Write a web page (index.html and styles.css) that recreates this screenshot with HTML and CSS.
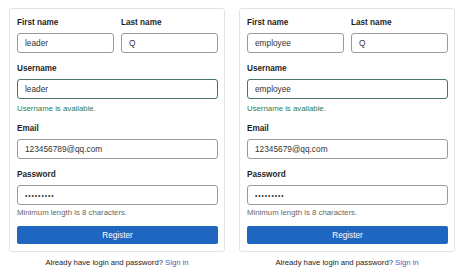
FILE: index.html
```html
<!DOCTYPE html>
<html>
<head>
<meta charset="utf-8">
<link rel="stylesheet" href="styles.css">
</head>
<body>
<div class="page">
  <div class="col">
    <form class="card">
      <div class="names">
        <div class="field">
          <label class="label">First name</label>
          <input class="input" type="text" value="leader">
        </div>
        <div class="field">
          <label class="label">Last name</label>
          <input class="input" type="text" value="Q">
        </div>
      </div>
      <div class="field">
        <label class="label">Username</label>
        <input class="input valid" type="text" value="leader">
        <div class="help ok">Username is available.</div>
      </div>
      <div class="field">
        <label class="label">Email</label>
        <input class="input" type="text" value="123456789@qq.com">
      </div>
      <div class="field">
        <label class="label">Password</label>
        <input class="input pw" type="password" value="123456789">
        <div class="help hint">Minimum length is 8 characters.</div>
      </div>
      <button class="btn" type="button">Register</button>
    </form>
    <p class="foot">Already have login and password? <a class="link" href="#">Sign in</a></p>
  </div>
  <div class="col">
    <form class="card">
      <div class="names">
        <div class="field">
          <label class="label">First name</label>
          <input class="input" type="text" value="employee">
        </div>
        <div class="field">
          <label class="label">Last name</label>
          <input class="input" type="text" value="Q">
        </div>
      </div>
      <div class="field">
        <label class="label">Username</label>
        <input class="input valid" type="text" value="employee">
        <div class="help ok">Username is available.</div>
      </div>
      <div class="field">
        <label class="label">Email</label>
        <input class="input" type="text" value="12345679@qq.com">
      </div>
      <div class="field">
        <label class="label">Password</label>
        <input class="input pw" type="password" value="123456789">
        <div class="help hint">Minimum length is 8 characters.</div>
      </div>
      <button class="btn" type="button">Register</button>
    </form>
    <p class="foot">Already have login and password? <a class="link" href="#">Sign in</a></p>
  </div>
</div>
</body>
</html>
```
FILE: styles.css
```css
* { box-sizing: border-box; }
html, body { margin: 0; padding: 0; background: #ffffff; }
body {
  font-family: "Liberation Sans", Arial, sans-serif;
  color: #1f1f1f;
  width: 474px;
  height: 277px;
  overflow: hidden;
}
.page {
  display: flex;
  gap: 14px;
  padding: 8px 0 0 9px;
}
.col {
  width: 216px;
  display: flex;
  flex-direction: column;
}
.card {
  margin: 0;
  border: 1px solid #e2e2e2;
  border-radius: 3px;
  padding: 9px 6px 7px 7px;
  display: flex;
  flex-direction: column;
}
.names {
  display: grid;
  grid-template-columns: 1fr 1fr;
  gap: 7px;
}
.field {
  display: flex;
  flex-direction: column;
  margin-bottom: 11px;
}
.label {
  font-size: 8.2px;
  font-weight: bold;
  line-height: 10px;
  height: 10px;
  margin-bottom: 5px;
  color: #1f1f1f;
}
.input {
  height: 20px;
  border: 1px solid #9a9a9a;
  border-radius: 3px;
  padding: 0 7px;
  font-family: "Liberation Sans", Arial, sans-serif;
  font-size: 8.3px;
  color: #333;
  background: #fff;
  outline: none;
  width: 100%;
}
.input.valid {
  border-color: #4a7560;
  border-width: 1.5px;
}
.input.pw {
  letter-spacing: 1px;
  font-size: 6.5px;
}
.help {
  font-size: 7.8px;
  line-height: 10px;
  height: 10px;
  margin-top: 5px;
  margin-bottom: -1px;
}
.help.ok { color: #2f7a52; }
.help.hint { color: #666; margin-top: 3px; margin-bottom: 0; }
.btn {
  height: 18px;
  margin-top: -3px;
  border: 0;
  border-radius: 2px;
  background: #1f66c1;
  color: #fff;
  font-family: "Liberation Sans", Arial, sans-serif;
  font-size: 8.2px;
  width: 100%;
}
.foot {
  margin: 6px 0 0;
  text-align: center;
  font-size: 7.7px;
  line-height: 10px;
  color: #222;
}
.link { color: #2c6ec5; text-decoration: none; }
```
